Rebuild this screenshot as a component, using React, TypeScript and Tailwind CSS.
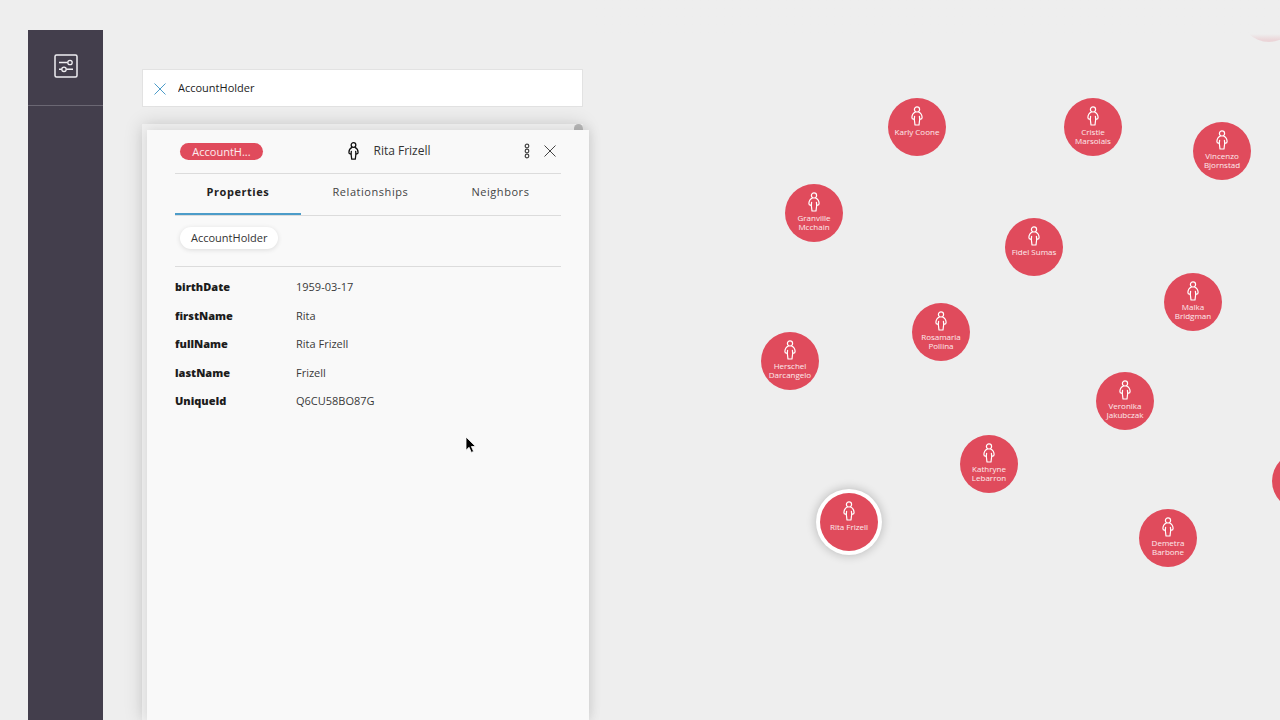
import { useState } from "react";
import clsx from "clsx";

type Person = {
  name: string;
  left: number;
  top: number;
  selected?: boolean;
  faded?: boolean;
};

const people: Person[] = [
  { name: "Karly Coone", left: 299, top: 98 },
  { name: "Cristie Marsolais", left: 475, top: 98 },
  { name: "Vincenzo Bjornstad", left: 604, top: 122 },
  { name: "Granville Mcchain", left: 196, top: 184 },
  { name: "Fidel Sumas", left: 416, top: 218 },
  { name: "Malka Bridgman", left: 575, top: 273 },
  { name: "Rosamaria Pollina", left: 323, top: 303 },
  { name: "Herschel Darcangelo", left: 172, top: 332 },
  { name: "Veronika Jakubczak", left: 507, top: 372 },
  { name: "Kathryne Lebarron", left: 371, top: 435 },
  { name: "Rita Frizell", left: 231, top: 493, selected: true },
  { name: "Demetra Barbone", left: 550, top: 509 },
  { name: "", left: 683, top: 452 },
  { name: "", left: 651, top: -16, faded: true },
];

const properties = [
  ["birthDate", "1959-03-17"],
  ["firstName", "Rita"],
  ["fullName", "Rita Frizell"],
  ["lastName", "Frizell"],
  ["UniqueId", "Q6CU58BO87G"],
];

const tabs = ["Properties", "Relationships", "Neighbors"];

const PersonIcon = ({ className }: { className?: string }) => (
  <svg
    viewBox="0 0 12 20"
    fill="none"
    stroke="currentColor"
    strokeLinejoin="round"
    strokeLinecap="round"
    className={className}
  >
    <circle cx="6" cy="3.4" r="2.6" />
    <path d="M4.3 6C2.3 7 .9 9.2.9 11.6c0 1 .6 1.6 1.5 1.6h.9L4 19h4l.7-5.8h.9c.9 0 1.5-.6 1.5-1.6 0-2.4-1.4-4.6-3.4-5.6" />
    <path d="M3.6 10.4l-.3 2.8M8.4 10.4l.3 2.8" />
  </svg>
);

const CrossIcon = ({ className }: { className?: string }) => (
  <svg viewBox="0 0 12 12" fill="none" stroke="currentColor" className={className}>
    <path d="M.5.5l11 11M11.5.5l-11 11" />
  </svg>
);

const Sidebar = () => (
  <nav className="mt-[30px] ml-7 w-[75px] shrink-0 bg-[#433e4c]">
    <button
      aria-label="Perspectives"
      className="flex h-[76px] w-full justify-center border-b border-[#6b6773] pt-6 text-[#efeef2]"
    >
      <svg viewBox="0 0 24 24" fill="none" stroke="currentColor" className="size-6">
        <rect x="1" y="1" width="22" height="22" rx="1.5" strokeWidth="1.5" />
        <path d="M5 8.5h8.5M5 15.3h2.7M12.3 15.3H19" strokeWidth="1.5" />
        <circle cx="16" cy="8.5" r="2.2" strokeWidth="1.3" />
        <circle cx="10" cy="15.3" r="2.2" strokeWidth="1.3" />
      </svg>
    </button>
  </nav>
);

const SearchBar = () => {
  const [query, setQuery] = useState("AccountHolder");
  return (
    <div className="mr-[6px] flex h-[38px] items-center gap-3 border border-[#e2e2e2] bg-white px-[11px]">
      <button aria-label="Clear search" onClick={() => setQuery("")} className="pt-px">
        <CrossIcon className="size-3 text-[#4c9cc9]" />
      </button>
      <input
        aria-label="Search"
        value={query}
        onChange={(e) => setQuery(e.target.value)}
        className="min-w-0 flex-1 text-[11px] text-[#1c1c1c] outline-none"
      />
    </div>
  );
};

const PanelHeader = () => (
  <header className="flex h-11 items-center border-b border-[#dcdcdc] pl-[5px]">
    <span className="h-[17px] w-[83px] rounded-full bg-[#e04b5c] text-center text-[11px] leading-[17px] text-white/90">
      AccountH...
    </span>
    <div className="flex flex-1 items-center justify-center gap-[14px] pr-2 pb-[2px]">
      <PersonIcon className="h-[18px] w-[11px] stroke-[1.4] text-[#111]" />
      <h1 className="text-[12px] text-[#333]">Rita Frizell</h1>
    </div>
    <div className="flex items-center gap-[14px] pr-[5px] pb-[2px] text-[#444]">
      <button aria-label="More">
        <svg
          viewBox="0 0 6 16"
          fill="none"
          stroke="currentColor"
          strokeWidth="1.2"
          className="h-4 w-[6px]"
        >
          <circle cx="3" cy="3" r="1.8" />
          <circle cx="3" cy="8" r="1.8" />
          <circle cx="3" cy="13" r="1.8" />
        </svg>
      </button>
      <button aria-label="Close">
        <CrossIcon className="size-3" />
      </button>
    </div>
  </header>
);

const DetailsPanel = () => {
  const [active, setActive] = useState("Properties");
  return (
    <section className="relative mt-[6px] ml-[5px] flex-1 bg-[#f9f9f9] px-7 shadow-[0_0_12px_rgba(0,0,0,0.12)]">
      <PanelHeader />
      <div role="tablist" className="flex h-[42px] border-b border-[#dcdcdc]">
        {tabs.map((tab) => (
          <button
            key={tab}
            role="tab"
            aria-selected={tab === active}
            onClick={() => setActive(tab)}
            className={clsx(
              "flex-auto border-b-2 pb-[2px] text-[11px] tracking-wider",
              tab === active
                ? "border-[#4c9cc9] font-bold text-[#222]"
                : "border-transparent text-[#444]"
            )}
          >
            {tab}
          </button>
        ))}
      </div>
      <div className="flex h-[51px] items-center border-b border-[#dcdcdc] px-[5px] pb-[6px]">
        <span className="rounded-full bg-white px-[11px] text-[11px] leading-[22px] text-[#333] shadow-[0_1px_5px_rgba(0,0,0,0.12)]">
          AccountHolder
        </span>
      </div>
      <table className="mt-[6px] h-[143px] w-full text-left text-[11px]">
        <tbody>
          {properties.map(([key, value]) => (
            <tr key={key}>
              <th scope="row" className="w-[121px] p-0 font-extrabold text-[#1c1c1c]">
                {key}
              </th>
              <td className="p-0 text-[#3a3a3a]">{value}</td>
            </tr>
          ))}
        </tbody>
      </table>
    </section>
  );
};

const PersonNode = ({ person }: { person: Person }) => (
  <div
    style={{ left: person.left, top: person.top }}
    className={clsx(
      "absolute flex size-[58px] flex-col items-center rounded-full bg-[#e04b5c] pt-2 text-white",
      person.selected && "shadow-[0_0_0_4px_#fff,0_0_10px_5px_rgba(0,0,0,0.2)]",
      person.faded && "opacity-15"
    )}
  >
    {person.name && (
      <>
        <PersonIcon className="h-5 w-3 shrink-0 stroke-[1.2]" />
        <span className="mt-px w-12 text-center text-[8px] leading-[9px] text-white/90">
          {person.name}
        </span>
      </>
    )}
  </div>
);

const Graph = () => (
  <main className="relative min-w-0 flex-1 overflow-hidden">
    {people.map((person) => (
      <PersonNode key={`${person.left}-${person.top}`} person={person} />
    ))}
    <div className="absolute inset-x-0 top-0 h-10 bg-linear-to-b from-[#eeeeee] from-85% to-transparent" />
  </main>
);

const Cursor = () => (
  <svg viewBox="0 0 12 19" className="absolute top-[436px] left-[465px] z-10 h-[19px] w-3">
    <path
      d="M1 1v13.2l3.1-2.9 2.2 5.1 2.3-1-2.2-4.9h4.2z"
      fill="#000"
      stroke="#fff"
      strokeWidth=".8"
    />
  </svg>
);

export default function App() {
  return (
    <div className="relative flex h-screen overflow-hidden bg-[#eeeeee] font-['Open_Sans','Noto_Sans',sans-serif]">
      <Sidebar />
      <aside className="ml-[39px] flex w-[447px] shrink-0 flex-col pt-[69px]">
        <SearchBar />
        <div className="relative mt-[17px] mr-[6px] flex flex-1 flex-col bg-[#f0f0f0] shadow-[0_0_18px_rgba(0,0,0,0.14)]">
          {/* scrollbar thumb of the list underneath */}
          <div className="absolute top-0 right-0 h-10 w-[9px] rounded-full bg-[#b5b5b5]" />
          <div className="-mr-[6px] flex flex-1 flex-col">
            <DetailsPanel />
          </div>
        </div>
      </aside>
      <Graph />
      <Cursor />
    </div>
  );
}
